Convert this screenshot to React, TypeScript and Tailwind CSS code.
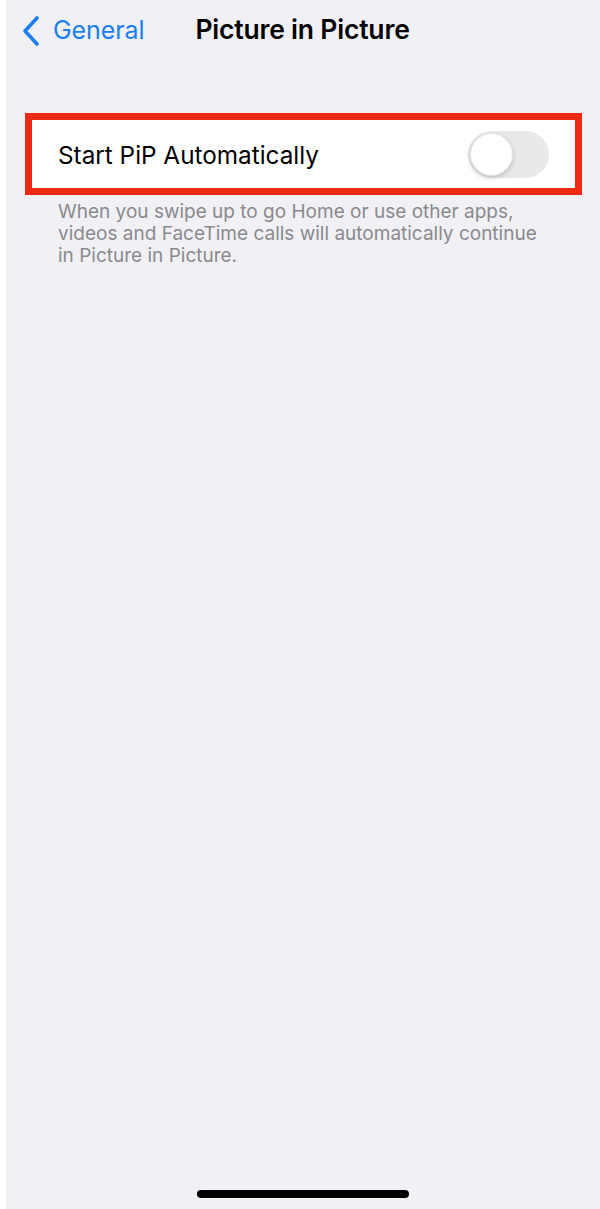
import React from "react";

export default function App() {
  return (
    <div
      className="flex w-[600px] h-[1209px] bg-white overflow-hidden"
      style={{ fontFamily: "Inter, 'Liberation Sans', sans-serif" }}
    >
      <div className="w-[6px] shrink-0 bg-white" />
      <div className="relative flex-1 flex flex-col bg-[#f0f0f5]">
        {/* Nav bar */}
        <div className="relative h-[60px] flex items-center">
          <div className="flex items-center pl-[14px] pt-[1px]">
            <svg width="22" height="32" viewBox="0 0 22 32" className="ml-[1px]">
              <path
                d="M16 3 L4 16 L16 29"
                fill="none"
                stroke="#1a7ff0"
                strokeWidth="3.6"
                strokeLinecap="round"
                strokeLinejoin="round"
              />
            </svg>
            <span className="ml-[10px] text-[25px] text-[#1a7ff0] tracking-[-0.1px]">General</span>
          </div>
          <span className="ml-[51px] text-[26.5px] font-semibold text-black tracking-[-0.2px]">
            Picture in Picture
          </span>
        </div>

        {/* Card */}
        <div className="mt-[53px] ml-[19px] mr-[18px] h-[82px] border-[7px] border-[#f02a12] bg-white flex items-center justify-between pl-[26px] pr-[26px]">
          <span className="pt-[3px] text-[24.3px] text-black">Start PiP Automatically</span>
          <div className="w-[81px] h-[47px] rounded-full bg-[#e9e9eb] p-[2px] flex items-center">
            <div className="w-[43px] h-[43px] rounded-full bg-white shadow-[0_2px_5px_rgba(0,0,0,0.18)] border border-[#e4e4e6]" />
          </div>
        </div>

        {/* Footer */}
        <p className="mt-[6px] ml-[52px] w-[480px] text-[19px] leading-[22px] text-[#8a8a8e]">
          When you swipe up to go Home or use other apps, videos and FaceTime calls will automatically continue in Picture in Picture.
        </p>

        {/* Home indicator */}
        <div className="absolute bottom-[11px] left-[191px] w-[212px] h-[8px] rounded-full bg-black" />
      </div>
    </div>
  );
}
